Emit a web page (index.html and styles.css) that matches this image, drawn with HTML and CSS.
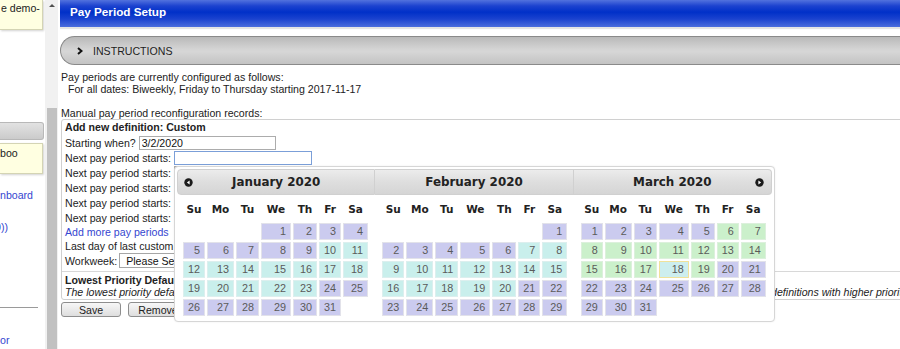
FILE: index.html
```html
<!DOCTYPE html>
<html lang="en">
<head>
    <meta charset="UTF-8">
    <meta name="viewport" content="width=device-width, initial-scale=1.0">
    <title>Pay Period Setup</title>
    <link rel="stylesheet" href="styles.css">
</head>
<body>

<div class="page">
    <div class="sidebar">
        <div class="note note-top">e demo-</div>
        <div class="side-head"></div>
        <div class="note note-mid">boo</div>
        <a class="side-link link-board" href="#">nboard</a>
        <a class="side-link link-count" href="#">0))</a>
        <div class="side-rule"></div>
        <a class="side-link link-or" href="#">or</a>
    </div>

    <div class="scrollbar">
        <div class="scroll-arrow"></div>
        <div class="scroll-thumb"></div>
    </div>

    <div class="main">
        <div class="title-bar">Pay Period Setup</div>

        <div class="instructions">
            <svg class="chevron" width="6" height="8" viewBox="0 0 6 8"><polyline points="1,1 4.5,4 1,7" fill="none" stroke="#111" stroke-width="2"/></svg>
            INSTRUCTIONS
        </div>

        <p class="summary">
            Pay periods are currently configured as follows:<br>
            <span class="indent">For all dates: Biweekly, Friday to Thursday starting 2017-11-17</span>
        </p>
        <p class="records-label">Manual pay period reconfiguration records:</p>

        <div class="records">
            <div class="section">
                <div class="row bold">Add new definition: Custom</div>
                <div class="row"><span>Starting when?</span><input class="field field-start" value="3/2/2020"></div>
                <div class="row"><span>Next pay period starts:</span><input class="field field-focus"></div>
                <div class="row"><span>Next pay period starts:</span><input class="field"></div>
                <div class="row"><span>Next pay period starts:</span><input class="field"></div>
                <div class="row"><span>Next pay period starts:</span><input class="field"></div>
                <div class="row"><span>Next pay period starts:</span><input class="field"></div>
                <div class="row row-short"><a class="add-link" href="#">Add more pay periods</a></div>
                <div class="row row-short"><span>Last day of last custom pay period:</span><input class="field"></div>
                <div class="row"><span>Workweek:</span><select class="select"><option>Please Select...</option></select></div>
            </div>
            <div class="section section-default">
                <div class="bold">Lowest Priority Default</div>
                <div class="italic">The lowest priority default pay period definition is used for any dates that are not covered by one of the manual reconfiguration records or by any other definitions with higher priority.</div>
            </div>
        </div>

        <div class="actions">
            <button>Save</button>
            <button>Remove</button>
        </div>

        <div class="datepicker" id="datepicker"></div>
    </div>
</div>

<script>
    const months = [
        { title: 'January 2020', first: 3, days: 31, from: 10, to: 23, tint: 'teal' },
        { title: 'February 2020', first: 6, days: 29, from: 7, to: 20, tint: 'teal' },
        { title: 'March 2020', first: 0, days: 31, from: 6, to: 19, tint: 'green', today: 18 }
    ];
    const weekdays = ['Su', 'Mo', 'Tu', 'We', 'Th', 'Fr', 'Sa'];

    const prevIcon = '<svg class="nav nav-prev" width="9" height="9" viewBox="0 0 9 9"><circle cx="4.5" cy="4.5" r="4.2" fill="#1a1a1a"/><polygon points="5.6,2.5 2.9,4.5 5.6,6.5" fill="#fff"/></svg>';
    const nextIcon = '<svg class="nav nav-next" width="9" height="9" viewBox="0 0 9 9"><circle cx="4.5" cy="4.5" r="4.2" fill="#1a1a1a"/><polygon points="3.4,2.5 6.1,4.5 3.4,6.5" fill="#fff"/></svg>';

    function buildMonth(month, index) {
        let html = '<div class="cal-month">';
        html += '<div class="cal-header">';
        if (index === 0) html += prevIcon;
        if (index === months.length - 1) html += nextIcon;
        html += month.title + '</div>';

        html += '<div class="cal-grid cal-dow">';
        weekdays.forEach(d => { html += '<div>' + d + '</div>'; });
        html += '</div><div class="cal-grid cal-days">';

        for (let i = 0; i < month.first; i++) {
            html += '<div class="cal-empty"></div>';
        }
        for (let day = 1; day <= month.days; day++) {
            let cls = 'lavender';
            if (day >= month.from && day <= month.to) cls = month.tint;
            if (day === month.today) cls = 'teal today';
            html += '<div class="cal-day ' + cls + '">' + day + '</div>';
        }
        html += '</div></div>';
        return html;
    }

    document.getElementById('datepicker').innerHTML = months.map(buildMonth).join('');
</script>

</body>
</html>
```

FILE: styles.css
```css
body {
    margin: 0;
    font-family: "Liberation Sans", Arial, sans-serif;
    font-size: 10.6px;
    color: #222;
    background: #fff;
}
.page {
    display: flex;
    height: 349px;
    overflow: hidden;
}

/* left navigation (cut off) */
.sidebar {
    width: 45px;
    flex-shrink: 0;
    overflow: hidden;
    white-space: nowrap;
    line-height: 12px;
}
.note {
    width: 42px;
    background: #ffffe1;
    border: 1px solid #d4d4b4;
    border-left: none;
    box-shadow: 1px 1px 2px rgba(0, 0, 0, 0.18);
    box-sizing: content-box;
}
.note-top {
    height: 27px;
    padding-top: 2px;
    border-top: none;
    padding-left: 1px;
    width: 41px;
}
.note-mid {
    margin-top: 3px;
    height: 26px;
    padding-top: 3px;
}
.side-head {
    margin-top: 92px;
    width: 43px;
    height: 16px;
    border: 1px solid #b8b8b8;
    border-left: none;
    border-radius: 0 3px 3px 0;
    background: linear-gradient(#e2e2e2, #cbcbcb);
}
.side-link {
    display: block;
    color: #3546d0;
    text-decoration: none;
}
.link-board {
    margin-top: 15px;
}
.link-count {
    margin-top: 20px;
    text-indent: -5px;
}
.side-rule {
    margin-top: 74px;
    width: 38px;
    border-top: 1px solid #9a9a9a;
}
.link-or {
    margin-top: 26px;
}

.scrollbar {
    width: 13px;
    flex-shrink: 0;
    background: #f1f1f1;
    position: relative;
}
.scroll-arrow {
    margin: 4px auto 0;
    width: 0;
    height: 0;
    border-left: 3px solid transparent;
    border-right: 3px solid transparent;
    border-bottom: 3px solid #505050;
}
.scroll-thumb {
    margin: 101px 1px 0 2px;
    height: 260px;
    background: #c1c1c1;
}

/* main content */
.main {
    flex: 1;
    margin-left: 2px;
    position: relative;
    overflow: hidden;
    white-space: nowrap;
}
.title-bar {
    height: 27px;
    box-sizing: border-box;
    padding: 5px 10px;
    line-height: 14px;
    font-size: 11.7px;
    font-weight: bold;
    color: #fff;
    background: linear-gradient(#5272de, #1c42cf 22%, #0030c8 45%, #1a42cf 70%, #4b6ddd);
    box-shadow: 0 2px 1px #e4e4e4;
}
.instructions {
    margin-top: 9px;
    height: 29px;
    box-sizing: border-box;
    display: flex;
    align-items: center;
    padding-left: 16px;
    border: 1px solid #8a8a8a;
    border-right: none;
    border-radius: 15px 0 0 15px;
    background: linear-gradient(#b9b9b9, #d4d4d4 45%, #d6d6d6 55%, #c3c3c3);
    color: #1e1e1e;
}
.chevron {
    margin-right: 10px;
}
.summary {
    margin: 6px 0 0 1px;
    line-height: 12px;
}
.indent {
    padding-left: 7px;
}
.records-label {
    margin: 12px 0 0 1px;
    line-height: 12px;
}

.records {
    margin: 0 -6px 0 1px;
    border: 1px solid #d0d0d0;
    border-radius: 3px;
}
.section {
    padding: 0 3px 3px;
}
.row {
    display: flex;
    align-items: center;
    height: 15px;
}
.row-short {
    height: 14px;
}
.bold {
    font-weight: bold;
    line-height: 12px;
}
.row.bold {
    line-height: 15px;
}
.italic {
    font-style: italic;
    line-height: 12px;
}
.field {
    margin-left: 3px;
    height: 14px;
    box-sizing: border-box;
    padding: 0 2px;
    border: 1px solid #acacac;
    font: inherit;
    color: #111;
    width: 137px;
}
.field-focus {
    width: 138px;
    border-color: #7b9fd8;
}
.select {
    margin-left: 2px;
    height: 15px;
    padding: 0 2px;
    border: 1px solid #a6a6a6;
    background: #fff;
    font: inherit;
    color: #111;
    width: 140px;
}
.add-link {
    color: #3546d0;
    text-decoration: none;
}
.section-default {
    border-top: 1px solid #d8d8d8;
    padding: 2px 3px 1px;
}

.actions {
    margin: 2px 0 0 1px;
    display: flex;
    gap: 7px;
}
.actions button {
    width: 60px;
    height: 15px;
    padding: 0;
    border: 1px solid #8e8e8e;
    border-radius: 3px;
    background: linear-gradient(#f7f7f7, #dedede);
    font: inherit;
    color: #222;
}

/* date picker popup */
.datepicker {
    position: absolute;
    left: 114px;
    top: 166px;
    width: 601px;
    height: 156px;
    box-sizing: border-box;
    padding: 2px;
    border: 1px solid #d6d6d6;
    border-radius: 4px;
    background: #fff;
    box-shadow: 0 0 2px rgba(0, 0, 0, 0.08);
    display: flex;
}
.cal-month {
    flex: 1;
}
.cal-header {
    position: relative;
    height: 26px;
    box-sizing: border-box;
    line-height: 24px;
    text-align: center;
    font-family: "DejaVu Sans", Verdana, sans-serif;
    font-size: 11.9px;
    font-weight: bold;
    color: #222;
    border: 1px solid #d0d0d0;
    border-left: none;
    background: linear-gradient(#ececec, #dedede 50%, #d5d5d5);
}
.cal-month:first-child .cal-header {
    border-left: 1px solid #d0d0d0;
    border-radius: 4px 0 0 4px;
}
.cal-month:last-child .cal-header {
    border-radius: 0 4px 4px 0;
}
.nav {
    position: absolute;
    top: 8px;
}
.nav-prev {
    left: 6px;
}
.nav-next {
    right: 7px;
}
.cal-grid {
    display: grid;
    grid-template-columns: 22px 27px 23px 30px 24px 22px 25px;
    column-gap: 2px;
    margin-left: 6px;
}
.cal-month + .cal-month .cal-grid {
    margin-left: 7px;
}
.cal-dow {
    height: 28px;
    line-height: 28px;
    text-align: center;
    font-family: "DejaVu Sans", Verdana, sans-serif;
    font-size: 10.5px;
    font-weight: bold;
    color: #222;
}
.cal-days {
    row-gap: 2px;
}
.cal-day {
    height: 17px;
    box-sizing: border-box;
    line-height: 15px;
    padding-right: 4px;
    text-align: right;
    border: 1px solid #e2e2ea;
    color: #5a5a5a;
    font-size: 10.8px;
}
.lavender {
    background: #cbcbef;
}
.teal {
    background: #c9efec;
    border-color: #dcefee;
}
.green {
    background: #cbf0cb;
    border-color: #dcf0dc;
}
.today {
    background: #cdeeee;
    border-color: #f0e29a;
}
```
